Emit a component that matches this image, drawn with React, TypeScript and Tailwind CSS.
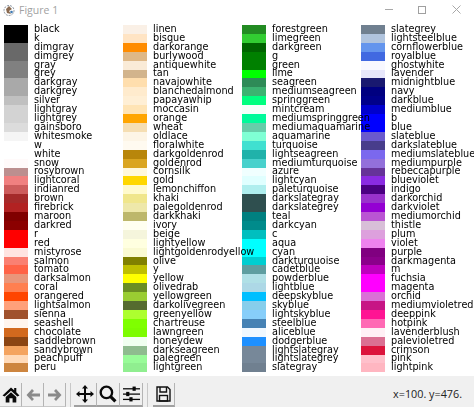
import type { ReactNode } from "react";

// [label, background class] per column, in the order of the chart
const columns: [string, string][][] = [
  [
    ["black", "bg-[#000000]"],
    ["k", "bg-[#000000]"],
    ["dimgray", "bg-[#696969]"],
    ["dimgrey", "bg-[#696969]"],
    ["gray", "bg-[#808080]"],
    ["grey", "bg-[#808080]"],
    ["darkgray", "bg-[#a9a9a9]"],
    ["darkgrey", "bg-[#a9a9a9]"],
    ["silver", "bg-[#c0c0c0]"],
    ["lightgray", "bg-[#d3d3d3]"],
    ["lightgrey", "bg-[#d3d3d3]"],
    ["gainsboro", "bg-[#dcdcdc]"],
    ["whitesmoke", "bg-[#f5f5f5]"],
    ["w", "bg-[#ffffff]"],
    ["white", "bg-[#ffffff]"],
    ["snow", "bg-[#fffafa]"],
    ["rosybrown", "bg-[#bc8f8f]"],
    ["lightcoral", "bg-[#f08080]"],
    ["indianred", "bg-[#cd5c5c]"],
    ["brown", "bg-[#a52a2a]"],
    ["firebrick", "bg-[#b22222]"],
    ["maroon", "bg-[#800000]"],
    ["darkred", "bg-[#8b0000]"],
    ["r", "bg-[#ff0000]"],
    ["red", "bg-[#ff0000]"],
    ["mistyrose", "bg-[#ffe4e1]"],
    ["salmon", "bg-[#fa8072]"],
    ["tomato", "bg-[#ff6347]"],
    ["darksalmon", "bg-[#e9967a]"],
    ["coral", "bg-[#ff7f50]"],
    ["orangered", "bg-[#ff4500]"],
    ["lightsalmon", "bg-[#ffa07a]"],
    ["sienna", "bg-[#a0522d]"],
    ["seashell", "bg-[#fff5ee]"],
    ["chocolate", "bg-[#d2691e]"],
    ["saddlebrown", "bg-[#8b4513]"],
    ["sandybrown", "bg-[#f4a460]"],
    ["peachpuff", "bg-[#ffdab9]"],
    ["peru", "bg-[#cd853f]"],
  ],
  [
    ["linen", "bg-[#faf0e6]"],
    ["bisque", "bg-[#ffe4c4]"],
    ["darkorange", "bg-[#ff8c00]"],
    ["burlywood", "bg-[#deb887]"],
    ["antiquewhite", "bg-[#faebd7]"],
    ["tan", "bg-[#d2b48c]"],
    ["navajowhite", "bg-[#ffdead]"],
    ["blanchedalmond", "bg-[#ffebcd]"],
    ["papayawhip", "bg-[#ffefd5]"],
    ["moccasin", "bg-[#ffe4b5]"],
    ["orange", "bg-[#ffa500]"],
    ["wheat", "bg-[#f5deb3]"],
    ["oldlace", "bg-[#fdf5e6]"],
    ["floralwhite", "bg-[#fffaf0]"],
    ["darkgoldenrod", "bg-[#b8860b]"],
    ["goldenrod", "bg-[#daa520]"],
    ["cornsilk", "bg-[#fff8dc]"],
    ["gold", "bg-[#ffd700]"],
    ["lemonchiffon", "bg-[#fffacd]"],
    ["khaki", "bg-[#f0e68c]"],
    ["palegoldenrod", "bg-[#eee8aa]"],
    ["darkkhaki", "bg-[#bdb76b]"],
    ["ivory", "bg-[#fffff0]"],
    ["beige", "bg-[#f5f5dc]"],
    ["lightyellow", "bg-[#ffffe0]"],
    ["lightgoldenrodyellow", "bg-[#fafad2]"],
    ["olive", "bg-[#808000]"],
    ["y", "bg-[#bfbf00]"],
    ["yellow", "bg-[#ffff00]"],
    ["olivedrab", "bg-[#6b8e23]"],
    ["yellowgreen", "bg-[#9acd32]"],
    ["darkolivegreen", "bg-[#556b2f]"],
    ["greenyellow", "bg-[#adff2f]"],
    ["chartreuse", "bg-[#7fff00]"],
    ["lawngreen", "bg-[#7cfc00]"],
    ["honeydew", "bg-[#f0fff0]"],
    ["darkseagreen", "bg-[#8fbc8f]"],
    ["palegreen", "bg-[#98fb98]"],
    ["lightgreen", "bg-[#90ee90]"],
  ],
  [
    ["forestgreen", "bg-[#228b22]"],
    ["limegreen", "bg-[#32cd32]"],
    ["darkgreen", "bg-[#006400]"],
    ["g", "bg-[#008000]"],
    ["green", "bg-[#008000]"],
    ["lime", "bg-[#00ff00]"],
    ["seagreen", "bg-[#2e8b57]"],
    ["mediumseagreen", "bg-[#3cb371]"],
    ["springgreen", "bg-[#00ff7f]"],
    ["mintcream", "bg-[#f5fffa]"],
    ["mediumspringgreen", "bg-[#00fa9a]"],
    ["mediumaquamarine", "bg-[#66cdaa]"],
    ["aquamarine", "bg-[#7fffd4]"],
    ["turquoise", "bg-[#40e0d0]"],
    ["lightseagreen", "bg-[#20b2aa]"],
    ["mediumturquoise", "bg-[#48d1cc]"],
    ["azure", "bg-[#f0ffff]"],
    ["lightcyan", "bg-[#e0ffff]"],
    ["paleturquoise", "bg-[#afeeee]"],
    ["darkslategray", "bg-[#2f4f4f]"],
    ["darkslategrey", "bg-[#2f4f4f]"],
    ["teal", "bg-[#008080]"],
    ["darkcyan", "bg-[#008b8b]"],
    ["c", "bg-[#00bfbf]"],
    ["aqua", "bg-[#00ffff]"],
    ["cyan", "bg-[#00ffff]"],
    ["darkturquoise", "bg-[#00ced1]"],
    ["cadetblue", "bg-[#5f9ea0]"],
    ["powderblue", "bg-[#b0e0e6]"],
    ["lightblue", "bg-[#add8e6]"],
    ["deepskyblue", "bg-[#00bfff]"],
    ["skyblue", "bg-[#87ceeb]"],
    ["lightskyblue", "bg-[#87cefa]"],
    ["steelblue", "bg-[#4682b4]"],
    ["aliceblue", "bg-[#f0f8ff]"],
    ["dodgerblue", "bg-[#1e90ff]"],
    ["lightslategray", "bg-[#778899]"],
    ["lightslategrey", "bg-[#778899]"],
    ["slategray", "bg-[#708090]"],
  ],
  [
    ["slategrey", "bg-[#708090]"],
    ["lightsteelblue", "bg-[#b0c4de]"],
    ["cornflowerblue", "bg-[#6495ed]"],
    ["royalblue", "bg-[#4169e1]"],
    ["ghostwhite", "bg-[#f8f8ff]"],
    ["lavender", "bg-[#e6e6fa]"],
    ["midnightblue", "bg-[#191970]"],
    ["navy", "bg-[#000080]"],
    ["darkblue", "bg-[#00008b]"],
    ["mediumblue", "bg-[#0000cd]"],
    ["b", "bg-[#0000ff]"],
    ["blue", "bg-[#0000ff]"],
    ["slateblue", "bg-[#6a5acd]"],
    ["darkslateblue", "bg-[#483d8b]"],
    ["mediumslateblue", "bg-[#7b68ee]"],
    ["mediumpurple", "bg-[#9370db]"],
    ["rebeccapurple", "bg-[#663399]"],
    ["blueviolet", "bg-[#8a2be2]"],
    ["indigo", "bg-[#4b0082]"],
    ["darkorchid", "bg-[#9932cc]"],
    ["darkviolet", "bg-[#9400d3]"],
    ["mediumorchid", "bg-[#ba55d3]"],
    ["thistle", "bg-[#d8bfd8]"],
    ["plum", "bg-[#dda0dd]"],
    ["violet", "bg-[#ee82ee]"],
    ["purple", "bg-[#800080]"],
    ["darkmagenta", "bg-[#8b008b]"],
    ["m", "bg-[#bf00bf]"],
    ["fuchsia", "bg-[#ff00ff]"],
    ["magenta", "bg-[#ff00ff]"],
    ["orchid", "bg-[#da70d6]"],
    ["mediumvioletred", "bg-[#c71585]"],
    ["deeppink", "bg-[#ff1493]"],
    ["hotpink", "bg-[#ff69b4]"],
    ["lavenderblush", "bg-[#fff0f5]"],
    ["palevioletred", "bg-[#db7093]"],
    ["crimson", "bg-[#dc143c]"],
    ["pink", "bg-[#ffc0cb]"],
    ["lightpink", "bg-[#ffb6c1]"],
  ],
];

function ToolButton({ children, wide, pressed }: { children: ReactNode; wide?: boolean; pressed?: boolean }) {
  return (
    <div
      className={`flex h-[24px] items-center justify-center border-r border-[#b4b4b4] ${wide ? "w-[23px]" : "w-[22px]"} ${
        pressed ? "border-b-[2px] border-b-[#a0a0a0]" : "border-b border-b-[#c8c8c8]"
      }`}
    >
      {children}
    </div>
  );
}

const HomeIcon = () => (
  <svg width="18" height="16" viewBox="0 0 17 15">
    <path d="M8.5 0.5 L0.5 8 L2.5 9 L8.5 3.5 L14.5 9 L16.5 8 L13.5 5 V1 H11.5 V3 Z" fill="#0a0a0a" />
    <path d="M3.5 9.5 L8.5 5 L13.5 9.5 V14.5 H10 V10.5 H7 V14.5 H3.5 Z" fill="#0a0a0a" />
  </svg>
);

const ArrowIcon = ({ flip }: { flip?: boolean }) => (
  <svg width="16" height="14" viewBox="0 0 16 14" className={flip ? "-scale-x-100" : ""}>
    <path d="M7 1 L1.5 7 L7 13 L9 11 L6.5 8.5 H15 V5.5 H6.5 L9 3 Z" fill="#8a8a8a" />
  </svg>
);

const MoveIcon = () => (
  <svg width="18" height="18" viewBox="0 0 18 18">
    <path
      d="M9 0 L12 3.5 H10 V8 H14.5 V6 L18 9 L14.5 12 V10 H10 V14.5 H12 L9 18 L6 14.5 H8 V10 H3.5 V12 L0 9 L3.5 6 V8 H8 V3.5 H6 Z"
      fill="#0a0a0a"
    />
  </svg>
);

const ZoomIcon = () => (
  <svg width="18" height="18" viewBox="0 0 17 17" fill="none" stroke="#0a0a0a">
    <circle cx="7" cy="7" r="5.4" strokeWidth="2.2" />
    <path d="M11 11 L15.5 15.5" strokeWidth="3" />
  </svg>
);

const SlidersIcon = () => (
  <svg width="17" height="16" viewBox="0 0 16 15" fill="#0a0a0a">
    <rect x="0" y="2" width="16" height="1.2" />
    <rect x="0" y="7" width="16" height="1.2" />
    <rect x="0" y="12" width="16" height="1.2" />
    <rect x="9" y="0.5" width="3" height="4" />
    <rect x="3" y="5.5" width="3" height="4" />
    <rect x="6" y="10.5" width="3" height="4" />
  </svg>
);

const SaveIcon = () => (
  <svg width="15" height="16" viewBox="0 0 15 16" fill="none" stroke="#111111" strokeWidth="1.4">
    <path d="M1 1 H11.5 L14 3.5 V15 H1 Z" />
    <path d="M4 1 V6 H10.5 V1" />
    <rect x="3.5" y="9.5" width="8" height="5.5" />
  </svg>
);

export default function App() {
  return (
    <div className="flex h-[407px] w-[474px] flex-col overflow-hidden bg-white font-['DejaVu_Sans',sans-serif] text-black">
      {/* Title bar */}
      <div className="flex h-[25px] shrink-0 items-start justify-between pt-[3px]">
        <div className="flex items-center gap-[4px] pl-[3px]">
          <svg width="12" height="13" viewBox="0 0 12 13">
            <circle cx="6" cy="6.5" r="5" fill="none" stroke="#8a94a0" strokeWidth="1" strokeDasharray="2 1" />
            <path d="M6 2 L9 5 L6 7 L8 10 L4 9 L3 5 Z" fill="#8a6a50" />
            <circle cx="8.5" cy="8" r="1.3" fill="#3d78b0" />
          </svg>
          <span className="font-['Open_Sans',sans-serif] text-[10.5px] leading-[14px] text-[#a2a2a2]">Figure 1</span>
        </div>
        <div className="flex items-center gap-[26px] pt-[2px] pr-[13px]">
          <div className="h-px w-[8px] bg-[#a8a8a8]" />
          <div className="-ml-px h-[8px] w-[8px] border border-[#a0a0a0]" />
          <svg width="9" height="9" viewBox="0 0 9 9" stroke="#a8a8a8" strokeWidth="1">
            <path d="M0.5 0.5 L8.5 8.5 M8.5 0.5 L0.5 8.5" />
          </svg>
        </div>
      </div>

      {/* Colour chart */}
      <div className="grid h-[351px] shrink-0 grid-cols-[119px_119px_119px_117px] pl-[4px] text-[9.7px] blur-[0.3px]">
        {columns.map((col, i) => (
          <div key={i}>
            {col.map(([name, bg]) => (
              <div key={name} className="flex h-[8.92px] items-center">
                <div className={`h-full w-[24px] shrink-0 ${bg}`} />
                <span className="relative z-10 ml-[6px] whitespace-nowrap pb-[2px] leading-[9px]">{name}</span>
              </div>
            ))}
          </div>
        ))}
      </div>

      {/* Toolbar */}
      <div className="flex h-[31px] shrink-0 items-start justify-between bg-[#f0f0f0] pt-[7px]">
        <div className="flex items-start">
          <ToolButton><HomeIcon /></ToolButton>
          <ToolButton><ArrowIcon /></ToolButton>
          <ToolButton><ArrowIcon flip /></ToolButton>
          <div className="mr-[3px] ml-[3px] h-[24px] w-[2px] border-r border-[#c8c8c8]" />
          <ToolButton wide pressed><MoveIcon /></ToolButton>
          <ToolButton wide pressed><ZoomIcon /></ToolButton>
          <ToolButton wide pressed><SlidersIcon /></ToolButton>
          <div className="mr-[5px] ml-[3px] h-[24px] w-[2px] border-r border-[#c8c8c8]" />
          <ToolButton pressed><SaveIcon /></ToolButton>
        </div>
        <span className="pt-[3px] pr-[12px] font-['Open_Sans',sans-serif] text-[10.8px] leading-[16px] text-[#222222]">
          x=100. y=476.
        </span>
      </div>
    </div>
  );
}
